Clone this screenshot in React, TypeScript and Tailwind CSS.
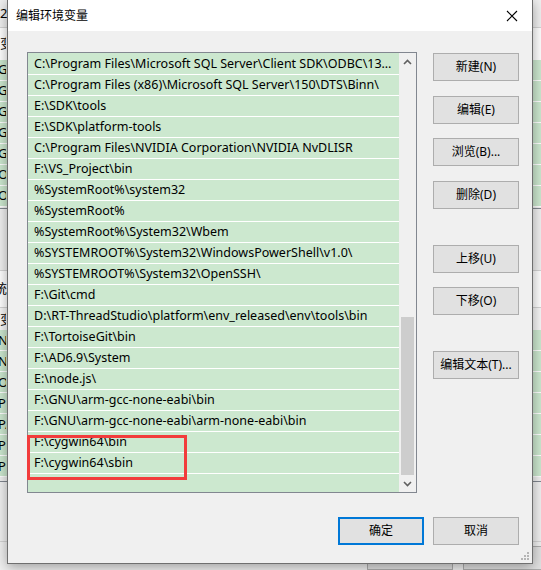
import clsx from 'clsx';

// Path entries shown in the list
const PATHS = [
  'C:\\Program Files\\Microsoft SQL Server\\Client SDK\\ODBC\\130\\Tools\\Binn\\',
  'C:\\Program Files (x86)\\Microsoft SQL Server\\150\\DTS\\Binn\\',
  'E:\\SDK\\tools',
  'E:\\SDK\\platform-tools',
  'C:\\Program Files\\NVIDIA Corporation\\NVIDIA NvDLISR',
  'F:\\VS_Project\\bin',
  '%SystemRoot%\\system32',
  '%SystemRoot%',
  '%SystemRoot%\\System32\\Wbem',
  '%SYSTEMROOT%\\System32\\WindowsPowerShell\\v1.0\\',
  '%SYSTEMROOT%\\System32\\OpenSSH\\',
  'F:\\Git\\cmd',
  'D:\\RT-ThreadStudio\\platform\\env_released\\env\\tools\\bin',
  'F:\\TortoiseGit\\bin',
  'F:\\AD6.9\\System',
  'E:\\node.js\\',
  'F:\\GNU\\arm-gcc-none-eabi\\bin',
  'F:\\GNU\\arm-gcc-none-eabi\\arm-none-eabi\\bin',
  'F:\\cygwin64\\bin',
  'F:\\cygwin64\\sbin',
];

const FONT = "font-['Noto_Sans','Noto_Sans_CJK_SC',sans-serif]";

function Btn({ label, primary, className }: { label: string; primary?: boolean; className?: string }) {
  return (
    <button
      className={clsx(
        'flex h-[28px] w-[86px] shrink-0 items-center justify-center bg-[#e1e1e1] text-[12px] text-black',
        primary ? 'border-2 border-[#0078d7]' : 'border border-[#adadad]',
        className,
      )}
    >
      {label}
    </button>
  );
}

function Chevron({ up }: { up?: boolean }) {
  return (
    <svg width="9" height="6" viewBox="0 0 9 6" className="text-[#606060]">
      <path
        d={up ? 'M1 5 L4.5 1.5 L8 5' : 'M1 1 L4.5 4.5 L8 1'}
        fill="none"
        stroke="currentColor"
        strokeWidth="1.6"
      />
    </svg>
  );
}

// One green row of the window behind; only its first letters peek out
function BackRow({ text }: { text: string }) {
  return (
    <div className="flex h-[21px] items-center border-b border-white bg-[#cce8cf]">
      <span className="w-[8px] overflow-hidden whitespace-nowrap">{text}</span>
    </div>
  );
}

// Window partly hidden behind the dialog
function BackWindow() {
  const upper = ['GI', 'GI', 'GI', 'GI', 'GI', 'On', 'On'];
  const lower = ['NU', 'NV', 'OS', 'Pa', 'PA', 'PR', 'PR'];
  return (
    <div className={clsx('flex h-full w-full flex-col bg-[#f0f0f0] text-[13px] text-black', FONT)}>
      <div className="flex h-[28px] items-center border-b border-[#d4d4d4]">
        <span className="w-[8px] overflow-hidden whitespace-nowrap">21</span>
      </div>
      <div className="mx-[-2px] flex h-[182px] flex-col border-b border-[#828790]">
        <div className="flex h-[32px] items-center bg-white pl-[2px]">
          <span className="w-[6px] overflow-hidden whitespace-nowrap">变</span>
        </div>
        {upper.map((v, i) => (
          <BackRow key={i} text={v} />
        ))}
      </div>
      <div className="h-[62px] border-b border-[#d4d4d4]" />
      <div className="flex h-[38px] items-center border-b border-[#d4d4d4] bg-white">
        <span className="-ml-[6px] w-[13px] overflow-hidden whitespace-nowrap">统</span>
      </div>
      <div className="mx-[-2px] flex h-[175px] flex-col border-b border-[#828790]">
        <div className="flex h-[22px] items-center bg-[#f7f7f7] pl-[2px]">
          <span className="w-[6px] overflow-hidden whitespace-nowrap">变</span>
        </div>
        {lower.map((v, i) => (
          <BackRow key={i} text={v} />
        ))}
      </div>
      <div className="h-[60px] border-b border-[#d4d4d4]" />
      <div className="flex justify-end gap-[10px] pt-[4px]">
        <div className="h-[24px] w-[86px] border border-[#adadad] bg-[#e1e1e1]" />
        <div className="mr-[-8px] h-[24px] w-[86px] border border-[#adadad] bg-[#e1e1e1]" />
      </div>
    </div>
  );
}

export default function App() {
  return (
    <div className={clsx('relative h-[570px] w-[541px] overflow-hidden', FONT)}>
      <BackWindow />

      {/* Dialog window */}
      <div className="absolute left-[7px] top-[-1px] flex h-[565px] w-[526px] flex-col border border-[#6f6f6f] bg-[#f0f0f0] shadow-[0_3px_12px_rgba(0,0,0,0.35)]">
        {/* Title bar */}
        <div className="flex h-[31px] shrink-0 items-center justify-between bg-white pl-[8px] pr-[14px]">
          <span className="text-[12px] text-black">编辑环境变量</span>
          <svg width="12" height="12" viewBox="0 0 12 12">
            <path d="M1 1 L11 11 M11 1 L1 11" stroke="#000" strokeWidth="1.1" />
          </svg>
        </div>

        <div className="flex flex-1 flex-col pl-[19px] pr-[13px] pt-[21px]">
          <div className="flex gap-[16px]">
            {/* Path list */}
            <div className="relative flex h-[441px] w-[390px] border border-[#828790] bg-[#cce8cf]">
              <div className="flex flex-1 flex-col overflow-hidden pt-px">
                {PATHS.map((p) => (
                  <div
                    key={p}
                    className="h-[21px] shrink-0 truncate border-b border-white pl-[6px] pr-[4px] text-[12.5px] leading-[20px] text-black"
                  >
                    {p}
                  </div>
                ))}
              </div>

              {/* Vertical scrollbar */}
              <div className="flex w-[17px] shrink-0 flex-col bg-[#f0f0f0]">
                <div className="flex h-[17px] items-center justify-center">
                  <Chevron up />
                </div>
                <div className="flex flex-1 flex-col justify-end px-[2px]">
                  <div className="h-[158px] bg-[#cdcdcd]" />
                </div>
                <div className="flex h-[17px] items-center justify-center">
                  <Chevron />
                </div>
              </div>

              {/* Highlight around the cygwin entries */}
              <div className="pointer-events-none absolute left-[-1px] top-[382px] h-[45px] w-[160px] border-[3px] border-[#f23c3c]" />
            </div>

            {/* Action buttons */}
            <div className="flex flex-col pt-px">
              <Btn label="新建(N)" />
              <Btn label="编辑(E)" className="mt-[15px]" />
              <Btn label="浏览(B)..." className="mt-[14px]" />
              <Btn label="删除(D)" className="mt-[15px]" />
              <Btn label="上移(U)" className="mt-[36px]" />
              <Btn label="下移(O)" className="mt-[14px]" />
              <Btn label="编辑文本(T)..." className="mt-[36px]" />
            </div>
          </div>

          <div className="mt-[24px] flex justify-end gap-[9px]">
            <Btn label="确定" primary />
            <Btn label="取消" />
          </div>
        </div>

        {/* Size grip */}
        <svg width="10" height="10" viewBox="0 0 10 10" className="absolute bottom-[2px] right-[2px]">
          <g fill="#b5b5b5">
            <rect x="7" y="1" width="2" height="2" />
            <rect x="4" y="4" width="2" height="2" />
            <rect x="7" y="4" width="2" height="2" />
            <rect x="1" y="7" width="2" height="2" />
            <rect x="4" y="7" width="2" height="2" />
            <rect x="7" y="7" width="2" height="2" />
          </g>
        </svg>
      </div>
    </div>
  );
}
